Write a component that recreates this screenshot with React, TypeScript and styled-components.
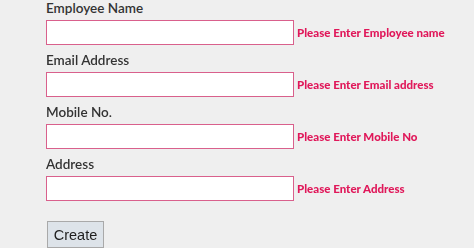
import styled, { createGlobalStyle } from "styled-components";

const GlobalStyle = createGlobalStyle`
   html, body {
      margin: 0;
      padding: 0;
      background: #efefef;
      overflow: hidden;
   }
   body {
      font-family: Lato, "Open Sans", sans-serif;
   }
`

const Form = styled.form`
   display: flex;
   flex-direction: column;
   padding: 0 0 0 46px;
   margin-top: -1px;
`

const Field = styled.div`
   display: flex;
   flex-direction: column;
   margin-bottom: 6px;
`

const Label = styled.label`
   font-size: 13.5px;
   font-weight: 600;
   color: #333;
   line-height: 18px;
   margin-bottom: 3px;
`

const Row = styled.div`
   display: flex;
   align-items: center;
`

const Input = styled.input`
   box-sizing: border-box;
   width: 248px;
   height: 25px;
   border: 1px solid #d9608c;
   background: #fff;
   outline: none;
   padding: 0 5px;
   font-size: 14px;
`

const Error = styled.span`
   margin-left: 3px;
   font-size: 11.5px;
   font-weight: 900;
   color: #e0185a;
`

const Button = styled.button`
   align-self: flex-start;
   margin-top: 14px;
   margin-left: 1px;
   width: 57px;
   height: 27px;
   border: 1px solid #a9a9a9;
   background: #dde3e9;
   color: #1e1e1e;
   font-family: "Liberation Sans", Arial, sans-serif;
   font-size: 14.5px;
   padding: 0;
`

const fields = [
   { label: 'Employee Name', error: 'Please Enter Employee name', focus: true },
   { label: 'Email Address', error: 'Please Enter Email address' },
   { label: 'Mobile No.', error: 'Please Enter Mobile No' },
   { label: 'Address', error: 'Please Enter Address' },
]

export default function App() {
   return (
      <>
         <GlobalStyle />
         <Form onSubmit={(e) => e.preventDefault()}>
            {fields.map((f, i) => (
               <Field key={i}>
                  <Label>{f.label}</Label>
                  <Row>
                     <Input autoFocus={f.focus} />
                     <Error>{f.error}</Error>
                  </Row>
               </Field>
            ))}
            <Button type="submit">Create</Button>
         </Form>
      </>
   )
}
